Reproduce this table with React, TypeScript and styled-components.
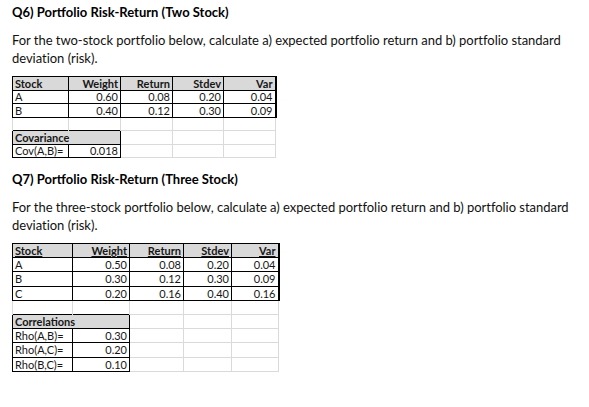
import React from 'react';
import styled, { createGlobalStyle } from 'styled-components';

const GlobalStyle = createGlobalStyle`
  html, body {
    margin: 0;
    padding: 0;
    background: #ffffff;
  }
  body {
    font-family: Lato, "Open Sans", sans-serif;
    color: #000;
  }
`;

const Page = styled.div`
  width: 589px;
  height: 407px;
  padding: 0 0 0 12px;
  box-sizing: border-box;
  overflow: hidden;
`;

const Section = styled.section<{ $top: number }>`
  padding-top: ${(p) => p.$top}px;
`;

const Title = styled.h2`
  margin: 0;
  font-size: 13px;
  line-height: 18px;
  font-weight: 700;
`;

const Para = styled.p`
  margin: 10px 0 0;
  width: 575px;
  font-size: 13px;
  line-height: 18px;
  letter-spacing: -0.03px;
  color: #111;
`;

const Sheet = styled.table<{ $rowH: number }>`
  margin-top: 9px;
  border-collapse: collapse;
  table-layout: fixed;
  font-family: Lato, "Open Sans", sans-serif;
  font-size: 11px;

  tr {
    height: ${(p) => p.$rowH}px;
  }
`;

type Kind = 'head' | 'data' | 'empty';

const Cell = styled.td<{ $kind: Kind; $right?: boolean; $lastCol?: boolean; $lastRow?: boolean; $ul?: boolean }>`
  padding: 0 2px;
  line-height: 1;
  white-space: nowrap;
  text-align: ${(p) => (p.$right ? 'right' : 'left')};
  font-weight: ${(p) => (p.$kind === 'head' ? 700 : 400)};
  text-decoration: ${(p) => (p.$ul ? 'underline' : 'none')};
  background: ${(p) => (p.$kind === 'head' ? '#d9d9d9' : '#fff')};
  color: #161616;
  border: ${(p) => (p.$kind === 'empty' ? 'none' : '1px solid #000')};
  ${(p) =>
    p.$kind === 'empty' &&
    `
    border-top: 1px solid #dadada;
    border-left: 1px solid #dadada;
  `}
  ${(p) => p.$kind === 'empty' && p.$lastCol && 'border-right: 1px solid #dadada;'}
  ${(p) => p.$kind === 'empty' && p.$lastRow && 'border-bottom: 1px solid #dadada;'}
  ${(p) => p.$kind !== 'empty' && p.$lastCol && 'border-right-width: 2px;'}
`;

type Stock = { name: string; w: string; r: string; s: string; v: string };

const cols = ['Stock', 'Weight', 'Return', 'Stdev', 'Var'];

function PortfolioSheet({
  widths,
  rowH,
  stocks,
  extraTitle,
  extras,
  underline,
}: {
  widths: number[];
  rowH: number;
  stocks: Stock[];
  extraTitle: string;
  extras: [string, string][];
  underline?: boolean;
}) {
  const blanks = (n: number, lastRow: boolean) =>
    Array.from({ length: n }, (_, i) => (
      <Cell key={'b' + i} $kind="empty" $lastCol={i === n - 1} $lastRow={lastRow} />
    ));

  return (
    <Sheet $rowH={rowH}>
      <colgroup>
        {widths.map((w, i) => (
          <col key={i} style={{ width: w }} />
        ))}
      </colgroup>
      <tbody>
        <tr>
          {cols.map((c, i) => (
            <Cell key={c} $kind="head" $right={i > 0} $lastCol={i === 4} $ul={underline}>
              {c}
            </Cell>
          ))}
        </tr>
        {stocks.map((s) => (
          <tr key={s.name}>
            <Cell $kind="data">{s.name}</Cell>
            <Cell $kind="data" $right>{s.w}</Cell>
            <Cell $kind="data" $right>{s.r}</Cell>
            <Cell $kind="data" $right>{s.s}</Cell>
            <Cell $kind="data" $right $lastCol>{s.v}</Cell>
          </tr>
        ))}
        <tr>{blanks(5, false)}</tr>
        <tr>
          <Cell $kind="head" colSpan={2}>{extraTitle}</Cell>
          {blanks(3, false)}
        </tr>
        {extras.map(([label, val], i) => (
          <tr key={label}>
            <Cell $kind="data">{label}</Cell>
            <Cell $kind="data" $right>{val}</Cell>
            {blanks(3, i === extras.length - 1)}
          </tr>
        ))}
      </tbody>
    </Sheet>
  );
}

export default function App() {
  return (
    <Page>
      <GlobalStyle />
      <Section $top={3}>
        <Title>Q6) Portfolio Risk-Return (Two Stock)</Title>
        <Para>
          For the two-stock portfolio below, calculate a) expected portfolio return and b) portfolio standard
          deviation (risk).
        </Para>
        <PortfolioSheet
          widths={[56, 52, 52, 51, 52]}
          rowH={13.5}
          stocks={[
            { name: 'A', w: '0.60', r: '0.08', s: '0.20', v: '0.04' },
            { name: 'B', w: '0.40', r: '0.12', s: '0.30', v: '0.09' },
          ]}
          extraTitle="Covariance"
          extras={[['Cov(A,B)=', '0.018']]}
        />
      </Section>
      <Section $top={12}>
        <Title>Q7) Portfolio Risk-Return (Three Stock)</Title>
        <Para>
          For the three-stock portfolio below, calculate a) expected portfolio return and b) portfolio standard
          deviation (risk).
        </Para>
        <PortfolioSheet
          widths={[60, 57, 54, 48, 47]}
          rowH={14.2}
          underline
          stocks={[
            { name: 'A', w: '0.50', r: '0.08', s: '0.20', v: '0.04' },
            { name: 'B', w: '0.30', r: '0.12', s: '0.30', v: '0.09' },
            { name: 'C', w: '0.20', r: '0.16', s: '0.40', v: '0.16' },
          ]}
          extraTitle="Correlations"
          extras={[
            ['Rho(A,B)=', '0.30'],
            ['Rho(A,C)=', '0.20'],
            ['Rho(B,C)=', '0.10'],
          ]}
        />
      </Section>
    </Page>
  );
}
